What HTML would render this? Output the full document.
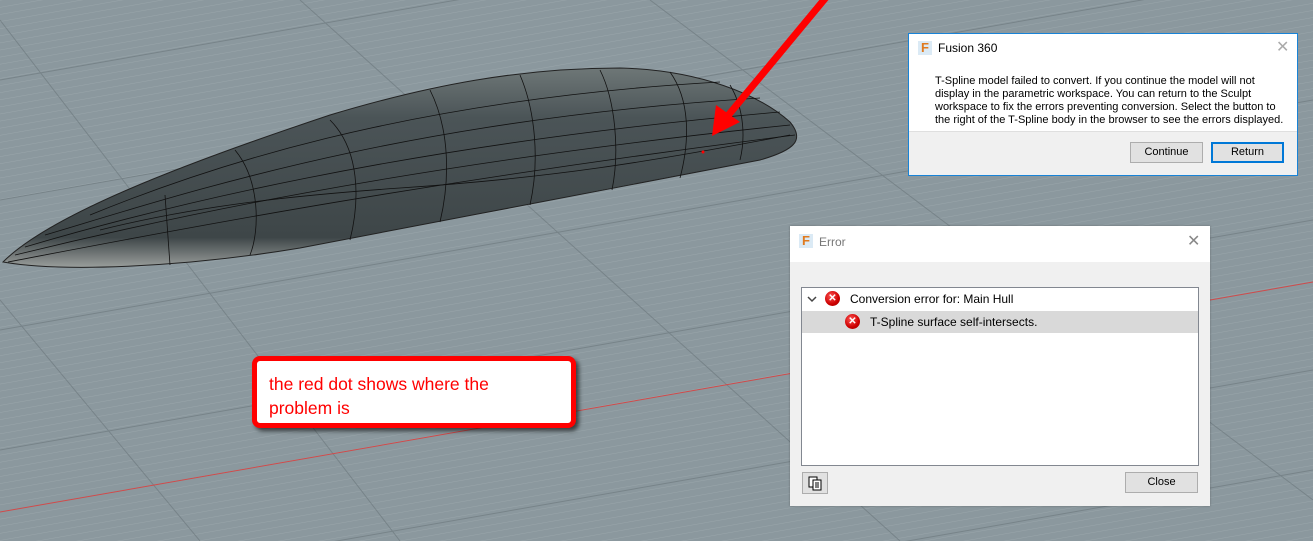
<!DOCTYPE html>
<html><head><meta charset="utf-8"><style>
html,body{margin:0;width:1313px;height:541px;overflow:hidden}
body{background:#8b989e;font-family:"Liberation Sans",sans-serif;position:relative}
.abs{position:absolute}
.dlg{position:absolute;background:#fff;font-size:11px;color:#000;box-sizing:border-box}
.btn{position:absolute;background:#e1e1e1;border:1px solid #adadad;text-align:center;font-size:11px;line-height:19px;box-sizing:border-box}
.ficon{position:absolute;width:14px;height:14px;background:#dbeaf5}
.ficon:after{content:"F";position:absolute;left:3px;top:-1px;color:#e07a1f;font-weight:bold;font-size:13px}
.err{position:absolute;width:15px;height:15px;border-radius:50%;background:radial-gradient(circle at 40% 35%,#f55,#c00 60%,#900);color:#fff;font-size:10px;font-weight:bold;text-align:center;line-height:15px}
</style></head><body>
<svg class="abs" style="left:0;top:0" width="1313" height="541">
<defs><pattern id="g" width="1313" height="7" patternUnits="userSpaceOnUse" patternTransform="rotate(-10)"><line x1="0" y1="0" x2="1313" y2="0" stroke="#9aa6ab" stroke-width="1"/></pattern>
<linearGradient id="h" x1="0" y1="0" x2="0" y2="1"><stop offset="0" stop-color="#6e7777"/><stop offset="0.25" stop-color="#4b5457"/><stop offset="0.85" stop-color="#3e4648"/><stop offset="1" stop-color="#9a9e9c"/></linearGradient></defs>
<rect width="1313" height="541" fill="url(#g)"/>
<g stroke="#6f7b80" stroke-width="1" opacity="0.7">
<line x1="0" y1="80" x2="1313" y2="-150"/><line x1="0" y1="200" x2="1313" y2="-30"/><line x1="0" y1="330" x2="1313" y2="100"/><line x1="0" y1="450" x2="1313" y2="220"/><line x1="0" y1="600" x2="1313" y2="370"/><line x1="0" y1="700" x2="1313" y2="470"/>
<line x1="0" y1="20" x2="400" y2="541"/><line x1="300" y1="0" x2="900" y2="541"/><line x1="650" y1="0" x2="1313" y2="500"/><line x1="0" y1="300" x2="200" y2="541"/>
</g>
<line x1="0" y1="512" x2="1313" y2="282" stroke="#d04a4a" stroke-width="1"/>
<path d="M3,262 C50,215 180,165 330,115 C430,85 520,68 620,68 C700,70 760,95 790,122 C805,140 795,150 760,160 C650,180 450,220 300,248 C180,268 60,272 3,262 Z" fill="url(#h)" stroke="#222" stroke-width="1"/>
<g stroke="#111" stroke-width="0.8" fill="none">
<path d="M8,262 C150,235 400,185 795,135"/><path d="M15,255 C150,222 400,165 790,125"/><path d="M25,247 C150,210 400,145 780,112"/><path d="M45,235 C180,195 400,120 760,98"/><path d="M90,215 C200,170 400,100 720,82"/>
<path d="M100,230 C200,205 300,195 400,188 C550,178 650,162 790,135"/>
<path d="M165,195 L170,265"/><path d="M235,150 C260,180 260,230 250,255"/><path d="M330,120 C360,150 360,200 350,240"/><path d="M430,90 C450,130 450,180 440,222"/><path d="M520,75 C535,110 540,160 530,205"/><path d="M600,70 C615,100 620,150 612,190"/><path d="M670,72 C690,100 690,140 680,178"/><path d="M730,85 C745,110 745,140 740,160"/>
</g>
<circle cx="703" cy="152" r="1.5" fill="#f00"/>
<line x1="828" y1="-5" x2="726" y2="118" stroke="#f00" stroke-width="7"/>
<polygon points="712,136 716,105 740,122" fill="#f00"/>
</svg>

<div class="abs" style="left:252px;top:356px;width:314px;height:62px;border:5px solid #f00;border-radius:8px;background:#fff;box-shadow:3px 3px 4px rgba(0,0,0,.6);color:#f00;font-size:17.5px;line-height:24px"><div style="position:absolute;left:12px;top:11px">the red dot shows where the<br>problem is</div></div>

<div class="dlg" style="left:908px;top:33px;width:390px;height:143px;border:1px solid #1883d7">
<div class="ficon" style="left:9px;top:7px"></div>
<div class="abs" style="left:29px;top:7px;font-size:12px">Fusion 360</div>
<div class="abs" style="left:367px;top:3px;font-size:16px;color:#aaa">✕</div>
<div class="abs" style="left:26px;top:41px;line-height:13px;white-space:nowrap;font-size:11px">T-Spline model failed to convert. If you continue the model will not<br>display in the parametric workspace. You can return to the Sculpt<br>workspace to fix the errors preventing conversion. Select the button to<br>the right of the T-Spline body in the browser to see the errors displayed.</div>
<div class="abs" style="left:0;top:97px;width:388px;height:44px;background:#f0f0f0;border-top:1px solid #dfdfdf;box-sizing:border-box"></div>
<div class="btn" style="left:221px;top:108px;width:73px;height:21px">Continue</div>
<div class="btn" style="left:302px;top:108px;width:73px;height:21px;border:2px solid #0078d7;line-height:17px">Return</div>
</div>

<div class="dlg" style="left:790px;top:226px;width:420px;height:280px;background:#f0f0f0;box-shadow:0 0 2px rgba(0,0,0,.3)">
<div class="abs" style="left:0;top:0;width:420px;height:36px;background:#fff"></div>
<div class="ficon" style="left:9px;top:8px"></div>
<div class="abs" style="left:29px;top:9px;font-size:12px;color:#777">Error</div>
<div class="abs" style="left:397px;top:5px;font-size:16px;color:#888">✕</div>
<div class="abs" style="left:11px;top:61px;width:398px;height:179px;background:#fff;border:1px solid #828790;box-sizing:border-box">
<svg class="abs" style="left:5px;top:8px" width="10" height="7"><path d="M1,1 L5,5 L9,1" stroke="#444" stroke-width="1.5" fill="none"/></svg>
<div class="err" style="left:23px;top:3px">✕</div>
<div class="abs" style="left:48px;top:4px;font-size:12px">Conversion error for: Main Hull</div>
<div class="abs" style="left:0;top:23px;width:396px;height:22px;background:#d9d9d9"></div>
<div class="err" style="left:43px;top:26px">✕</div>
<div class="abs" style="left:68px;top:27px;font-size:12px">T-Spline surface self-intersects.</div>
</div>
<div class="btn" style="left:12px;top:246px;width:26px;height:22px">
<svg width="24" height="20"><rect x="6" y="4" width="8" height="10" fill="#fff" stroke="#000"/><rect x="10" y="7" width="8" height="10" fill="#fff" stroke="#000"/><path d="M12,10h4M12,12h4M12,14h4" stroke="#000"/></svg></div>
<div class="btn" style="left:335px;top:246px;width:73px;height:21px">Close</div>
</div>
</body></html>
